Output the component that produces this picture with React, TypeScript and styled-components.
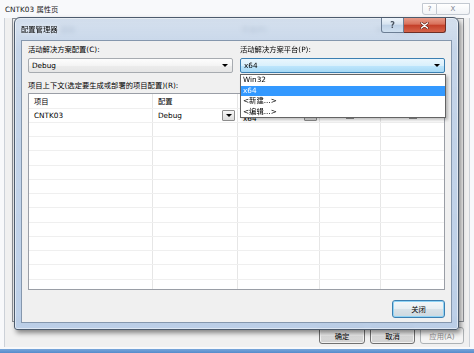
import React from 'react';
import styled, { createGlobalStyle, css } from 'styled-components';

interface FlagProps {
    $active?: boolean;
}

interface SizeProps {
    $w: number;
    $h: number;
    $default?: boolean;
}

interface GhostProps {
    $gap: number;
}

const GlobalStyle = createGlobalStyle`
    html, body {
        margin: 0;
        padding: 0;
    }
    body {
        width: 474px;
        height: 353px;
        overflow: hidden;
        font-family: "DejaVu Sans", "Noto Sans CJK SC", sans-serif;
        font-size: 7.3px;
        color: #000;
    }
`

const Screen = styled.div`
    position: relative;
    width: 474px;
    height: 353px;
    display: flex;
    flex-direction: column;
    background: #f8f9fb;
    overflow: hidden;
`

const OuterTitleBar = styled.div`
    height: 18px;
    flex-shrink: 0;
    display: flex;
    align-items: center;
    padding: 0 4px 0 5px;
`

const OuterTitle = styled.span`
    color: #1b1b1b;
    margin-top: -1px;
`

const CaptionGroup = styled.div`
    display: flex;
    margin-left: auto;
    align-self: flex-start;
    margin-top: 3px;
`

const OuterCapBtn = styled.div<{ $wide?: boolean }>`
    width: ${({ $wide }) => ($wide ? 33 : 15)}px;
    height: 12px;
    box-sizing: border-box;
    display: flex;
    align-items: center;
    justify-content: center;
    border: 1px solid #c3c9d1;
    background: linear-gradient(#ffffff, #f1f3f6);
    color: #7c8591;
    font-size: 7px;
    border-radius: ${({ $wide }) => ($wide ? '0 0 3px 0' : '0 0 0 3px')};
    & + & {
        border-left: none;
    }
`

const OuterClient = styled.div`
    flex: 1;
    display: flex;
    flex-direction: column;
    margin: 0 4px 2px 4px;
    padding: 0 5px 3px 7px;
    border-left: 1px solid #ccd1d8;
    border-right: 1px solid #ccd1d8;
    background: #f0f0f0;
`

const PagePanel = styled.div`
    flex: 1;
    border: 1px solid #8c9096;
    background: #f0f0f0;
`

const Toolbar = styled.div`
    height: 20px;
    display: flex;
    align-items: center;
    color: #4f5d6e;
`

const Ghost = styled.span<GhostProps>`
    margin-left: ${({ $gap }) => $gap}px;
`

const ButtonRow = styled.div`
    height: 17px;
    margin-top: 5px;
    display: flex;
    justify-content: flex-end;
    gap: 5px;
`

const PushButton = styled.button<SizeProps>`
    width: ${({ $w }) => $w}px;
    height: ${({ $h }) => $h}px;
    padding: 0;
    box-sizing: border-box;
    font-family: inherit;
    font-size: 7.3px;
    color: #000;
    border: 1px solid #707070;
    border-radius: 3px;
    background: linear-gradient(#f2f2f2, #ebebeb 50%, #dddddd 51%, #cfcfcf);
    box-shadow: inset 0 0 0 1px rgba(255, 255, 255, 0.7);

    ${({ $default }) => $default && css`
        border-color: #3c7fb1;
        background: linear-gradient(#f4f7f9, #e8eef2 50%, #d9e2e8 51%, #cdd8df);
        box-shadow: inset 0 0 0 1px #8fd3f5;
    `}

    &:disabled {
        color: #8d8d8d;
        border-color: #adb2b5;
        background: #f4f4f4;
        box-shadow: none;
    }
`

const BlueStrip = styled.div`
    height: 4px;
    flex-shrink: 0;
    background: linear-gradient(#79a6da, #558bcb);
`

const Dialog = styled.section`
    position: absolute;
    left: 14px;
    top: 17px;
    width: 445px;
    height: 313px;
    box-sizing: border-box;
    display: flex;
    flex-direction: column;
    padding: 0 6px 6px;
    border: 1px solid #4c5b6d;
    border-radius: 6px 6px 3px 3px;
    background: linear-gradient(180deg, rgba(206, 220, 237, 0.8) 0%, rgba(190, 208, 231, 0.86) 10%, rgba(182, 203, 230, 0.9) 100%);
    backdrop-filter: blur(2px);
    box-shadow: inset 0 0 0 1px rgba(255, 255, 255, 0.5), 2px 3px 5px rgba(0, 0, 0, 0.45);
`

const DialogTitleBar = styled.div`
    height: 22px;
    display: flex;
    align-items: center;
`

const DialogTitle = styled.span`
    color: #000;
    text-shadow: 0 0 4px rgba(255, 255, 255, 0.9);
`

const DialogCaps = styled.div`
    display: flex;
    margin-left: auto;
    margin-right: 6px;
    align-self: flex-start;
`

const CapBtn = styled.div<{ $close?: boolean }>`
    width: ${({ $close }) => ($close ? 42 : 23)}px;
    height: 15px;
    box-sizing: border-box;
    display: flex;
    align-items: center;
    justify-content: center;
    border: 1px solid #6c7e94;
    border-top: none;
    border-radius: 0 0 0 3px;
    background: linear-gradient(#eef4fa, #d6e3f0 45%, #bdd0e5 50%, #d0e0f0);
    color: #4a5562;
    font-size: 8px;
    font-weight: bold;

    ${({ $close }) => $close && css`
        border-color: #6e2f26;
        border-left: none;
        border-radius: 0 0 3px 0;
        background: linear-gradient(#e89a88, #d8705a 45%, #c43e28 50%, #d5644a);
    `}
`

const DialogBody = styled.div`
    flex: 1;
    display: flex;
    flex-direction: column;
    padding: 4px 6px 4px;
    border: 1px solid #8597ad;
    background: #f0f0f0;
`

const FieldRow = styled.div`
    display: grid;
    grid-template-columns: 1fr 1fr;
    column-gap: 7px;
`

const Field = styled.div`
    position: relative;
    display: flex;
    flex-direction: column;
`

const Label = styled.label`
    height: 10px;
    line-height: 10px;
    color: #000;
`

const FieldLabel = styled(Label)`
    margin-bottom: 3px;
`

const SectionLabel = styled(Label)`
    margin-top: 8px;
`

const Combo = styled.div<FlagProps>`
    height: 15px;
    box-sizing: border-box;
    display: flex;
    align-items: center;
    justify-content: space-between;
    padding: 0 4px 0 3px;
    border: 1px solid #a7abb0;
    border-radius: 2px;
    background: linear-gradient(#fdfdfd, #f4f4f4 50%, #ececec 51%, #e6e6e6);

    ${({ $active }) => $active && css`
        border-color: #3c7fb1;
        background: linear-gradient(#eaf6fd, #d9f0fc 50%, #bee6fd 51%, #a7d9f5);
    `}
`

const Arrow = styled.span`
    width: 0;
    height: 0;
    border-left: 3px solid transparent;
    border-right: 3px solid transparent;
    border-top: 3px solid #000;
`

const DropList = styled.ul`
    position: absolute;
    top: calc(100% + 1px);
    left: 0;
    right: -1px;
    z-index: 5;
    margin: 0;
    padding: 0;
    list-style: none;
    background: #fff;
    border: 1px solid #646464;
    box-shadow: 2px 2px 3px rgba(0, 0, 0, 0.25);
`

const DropItem = styled.li<FlagProps>`
    height: 10.5px;
    line-height: 10.5px;
    padding-left: 2px;
    color: #000;

    ${({ $active }) => $active && css`
        background: #3399ff;
        color: #fff;
    `}
`

const Table = styled.div`
    height: 197px;
    margin-top: 2px;
    box-sizing: border-box;
    border: 1px solid #9a9ea6;
    background: #fff;
    overflow: hidden;
`

const TableRow = styled.div<{ $head?: boolean }>`
    display: grid;
    grid-template-columns: 124px 85px 82px 61px 1fr;
    height: ${({ $head }) => ($head ? 14.5 : 14.25)}px;
    box-sizing: border-box;
    border-bottom: 1px solid #efefef;
`

const Cell = styled.div<{ $center?: boolean }>`
    display: flex;
    align-items: center;
    padding-left: ${({ $center }) => ($center ? 0 : 5)}px;
    justify-content: ${({ $center }) => ($center ? 'center' : 'flex-start')};
    border-right: 1px solid #e6e6e6;
    overflow: hidden;
    white-space: nowrap;

    &:last-child {
        border-right: none;
    }
`

const PlatformText = styled.span`
    padding-top: 6px;
`

const CellDrop = styled.span`
    width: 13px;
    height: 11px;
    box-sizing: border-box;
    margin-left: auto;
    margin-right: 2px;
    display: flex;
    align-items: center;
    justify-content: center;
    border: 1px solid #8d8d8d;
    border-radius: 1px;
    background: linear-gradient(#f7f7f7, #dcdcdc);
`

const Check = styled.span`
    width: 8px;
    height: 8px;
    box-sizing: border-box;
    display: flex;
    align-items: center;
    justify-content: center;
    border: 1px solid #8f8f8f;
    background: linear-gradient(135deg, #dedede, #ffffff);
`

const Footer = styled.div`
    margin-top: 10px;
    display: flex;
    justify-content: flex-end;
`

const platforms = ['Win32', 'x64', '<新建...>', '<编辑...>'];

const rows = [
    { name: 'CNTK03', config: 'Debug', platform: 'x64', build: true, deploy: false },
];

const emptyRows = Array.from({ length: 12 });

const CloseIcon = () => (
    <svg width="9" height="7" viewBox="0 0 9 7">
        <path d="M1.5 1 L7.5 6 M7.5 1 L1.5 6" stroke="#5a1e16" strokeWidth="2.6" strokeLinecap="round" />
        <path d="M1.5 1 L7.5 6 M7.5 1 L1.5 6" stroke="#ffffff" strokeWidth="1.5" strokeLinecap="round" />
    </svg>
);

const CheckMark = () => (
    <svg width="6" height="6" viewBox="0 0 6 6">
        <path d="M0.8 3 L2.4 4.6 L5.2 1.2" stroke="#222" strokeWidth="1.3" fill="none" />
    </svg>
);

const App = () => {
    return (
        <Screen>
            <GlobalStyle />
            <OuterTitleBar>
                <OuterTitle>CNTK03 属性页</OuterTitle>
                <CaptionGroup>
                    <OuterCapBtn>?</OuterCapBtn>
                    <OuterCapBtn $wide>X</OuterCapBtn>
                </CaptionGroup>
            </OuterTitleBar>
            <OuterClient>
                <PagePanel>
                    <Toolbar>
                        <Ghost $gap={47}>活动</Ghost>
                        <Ghost $gap={167}>平台(P)</Ghost>
                        <Ghost $gap={111}>▾</Ghost>
                        <Ghost $gap={14}>配置管</Ghost>
                    </Toolbar>
                </PagePanel>
                <ButtonRow>
                    <PushButton $w={46} $h={17}>确定</PushButton>
                    <PushButton $w={45} $h={17}>取消</PushButton>
                    <PushButton $w={44} $h={17} disabled>应用(A)</PushButton>
                </ButtonRow>
            </OuterClient>
            <BlueStrip />

            <Dialog>
                <DialogTitleBar>
                    <DialogTitle>配置管理器</DialogTitle>
                    <DialogCaps>
                        <CapBtn>?</CapBtn>
                        <CapBtn $close><CloseIcon /></CapBtn>
                    </DialogCaps>
                </DialogTitleBar>
                <DialogBody>
                    <FieldRow>
                        <Field>
                            <FieldLabel>活动解决方案配置(C):</FieldLabel>
                            <Combo>
                                <span>Debug</span>
                                <Arrow />
                            </Combo>
                        </Field>
                        <Field>
                            <FieldLabel>活动解决方案平台(P):</FieldLabel>
                            <Combo $active>
                                <span>x64</span>
                                <Arrow />
                            </Combo>
                            <DropList>
                                {platforms.map(p => (
                                    <DropItem key={p} $active={p === 'x64'}>{p}</DropItem>
                                ))}
                            </DropList>
                        </Field>
                    </FieldRow>
                    <SectionLabel>项目上下文(选定要生成或部署的项目配置)(R):</SectionLabel>
                    <Table>
                        <TableRow $head>
                            <Cell>项目</Cell>
                            <Cell>配置</Cell>
                            <Cell />
                            <Cell />
                            <Cell />
                        </TableRow>
                        {rows.map(r => (
                            <TableRow key={r.name}>
                                <Cell>{r.name}</Cell>
                                <Cell>{r.config}<CellDrop><Arrow /></CellDrop></Cell>
                                <Cell><PlatformText>{r.platform}</PlatformText><CellDrop><Arrow /></CellDrop></Cell>
                                <Cell $center><Check>{r.build && <CheckMark />}</Check></Cell>
                                <Cell $center><Check>{r.deploy && <CheckMark />}</Check></Cell>
                            </TableRow>
                        ))}
                        {emptyRows.map((_, i) => (
                            <TableRow key={i}>
                                <Cell />
                                <Cell />
                                <Cell />
                                <Cell />
                                <Cell />
                            </TableRow>
                        ))}
                    </Table>
                    <Footer>
                        <PushButton $w={53} $h={18} $default>关闭</PushButton>
                    </Footer>
                </DialogBody>
            </Dialog>
        </Screen>
    );
};

export default App;
